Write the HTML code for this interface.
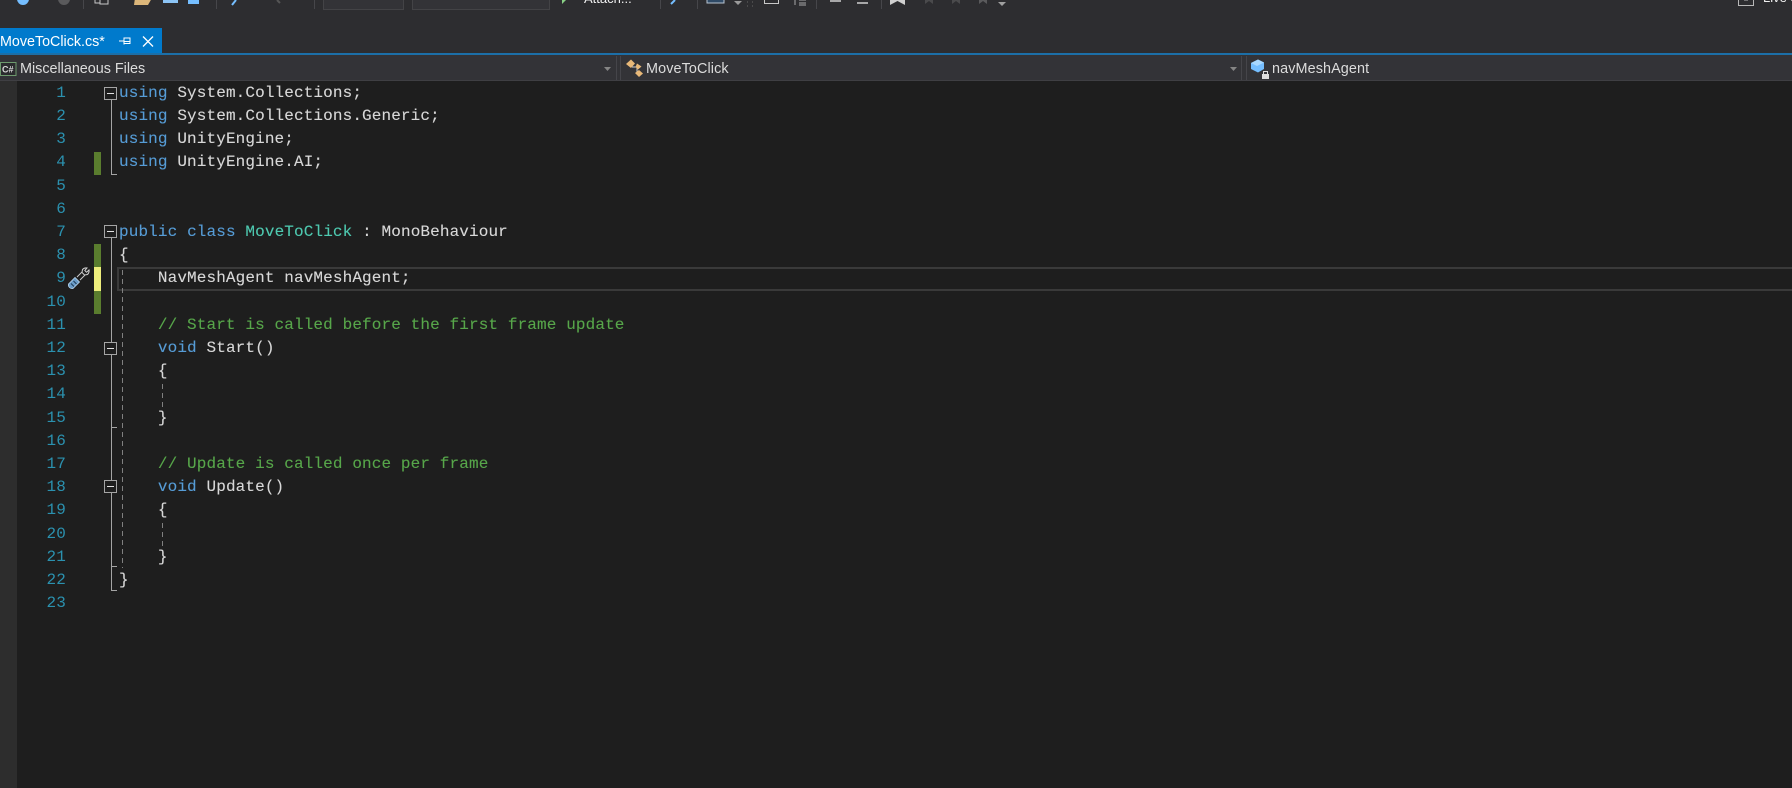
<!DOCTYPE html>
<html><head><meta charset="utf-8"><title>MoveToClick.cs</title>
<style>
html,body{margin:0;padding:0;background:#1e1e1e}
#r{position:relative;width:1792px;height:788px;overflow:hidden;background:#1e1e1e;font-family:"Liberation Sans",sans-serif}
#r div,#r svg,#r span.a{position:absolute}
.b{background:#2d2d30}
.ln,.cd{height:23.2px;line-height:23.2px;font-family:"Liberation Mono",monospace;font-size:16px;white-space:pre;top:calc(81.8px + var(--i)*23.2px)}
.ln{left:30px;width:36px;text-align:right;color:#2b91af;letter-spacing:.12px}
.cd{left:119px;color:#d8d8d8;letter-spacing:.12px;-webkit-text-stroke:.1px}
.k{color:#569cd6}.t{color:#4ec9b0}.c{color:#57a64a}
.ui{font-size:14.4px;line-height:24px;white-space:nowrap;color:#dcdcdc}
.sep{background:#46464a;width:1px;top:0;height:9px}
.v{background:#a5a5a5;width:1px}
.h{background:#a5a5a5;height:1px;width:6px;left:111px}
.fb{left:104px;width:11px;height:11px;border:1px solid #a5a5a5;background:#1e1e1e}
.fb::after{content:"";position:absolute;left:2px;right:2px;top:5px;height:1px;background:#e0e0e0}
.d{width:1px;background:repeating-linear-gradient(to bottom,#808080 0 5px,transparent 5px 9px)}
</style></head><body>
<div id="r">
<!-- toolbar -->
<div class="b" style="left:0;top:0;width:1792px;height:55px"></div>
<svg style="left:0;top:0" width="1792" height="12" viewBox="0 0 1792 12">
<circle cx="23" cy="-1" r="6" fill="#75beff"/><circle cx="64" cy="-1" r="6" fill="#5a5a5c"/>
<rect x="95" y="-4" width="9" height="7" fill="none" stroke="#c8c8c8"/><rect x="100" y="-2" width="8" height="6" fill="#2d2d30" stroke="#c8c8c8"/>
<path d="M135 -2H152L148 5H134Z" fill="#dcb67a"/>
<rect x="163" y="-2" width="15" height="5" fill="#8cc4f5"/><rect x="188" y="-2" width="11" height="6" fill="#75beff"/>
<path d="M232 5L236 0" stroke="#75beff" stroke-width="2"/><path d="M277 0L280 3" stroke="#555" stroke-width="2"/>
<rect x="323.500" y="-3" width="80" height="12.500" fill="#333337" stroke="#434346"/>
<rect x="412.500" y="-3" width="137" height="12.500" fill="#333337" stroke="#434346"/>
<path d="M562 0L566 0L562 4Z" fill="#89d185"/>
<path d="M671 4L675 0M675 -2h4" stroke="#75beff" stroke-width="2" fill="none"/>
<rect x="707" y="-3" width="17" height="6" fill="#2f4a66" stroke="#b8c4d0"/>
<path d="M734 1H742L738 5Z" fill="#9a9a9a"/>
<path d="M747 2h1M752 2h1M747 6h1M752 6h1" stroke="#666"/>
<rect x="764.500" y="-3" width="14" height="6.500" fill="none" stroke="#c8c8c8"/>
<path d="M795 0V5M799 0h7M799 3h7M799 5h7" stroke="#a8a8a8" fill="none"/>
<path d="M830 1h11M857 3h11" stroke="#d0d0d0" stroke-width="1.500"/>
<path d="M890 -2H905V5L897.500 1L890 5Z" fill="#d0d0d0"/>
<path d="M925 -2H933V4L929 1L925 4Z" fill="#4a4a4c"/><path d="M952 -2H960V4L956 1L952 4Z" fill="#4a4a4c"/><path d="M979 -2H987V4L983 1L979 4Z" fill="#5a5a5c"/>
<path d="M998 2H1006L1002 6Z" fill="#a0a0a0"/>
<path d="M1738.500 -3V5.500H1753.500V-3M1744 0H1748" fill="none" stroke="#b8b8b8"/>
</svg>
<div class="sep" style="left:83px"></div><div class="sep" style="left:216px"></div><div class="sep" style="left:314px"></div><div class="sep" style="left:660px"></div><div class="sep" style="left:697px"></div><div class="sep" style="left:816px"></div><div class="sep" style="left:881px"></div>
<div class="ui" style="left:584px;top:-13px;font-size:13px;color:#f1f1f1">Attach...</div>
<div class="ui" style="left:1763px;top:-14px;font-size:13px;color:#f1f1f1">Live Share</div>
<!-- tab -->
<div style="left:0;top:28px;width:162px;height:26px;background:#007acc"></div>
<div class="ui" style="left:0;top:29px;width:108px;color:#fff;font-size:14.300px;line-height:26px">MoveToClick.cs*</div>
<svg style="left:118px;top:34px" width="40" height="14" viewBox="0 0 40 14"><path d="M1 7H6M6 3.500V10.500M6 4H12V9.500H6M6 7.500H12" fill="none" stroke="#fff"/><path d="M25 2.500L35 12.500M35 2.500L25 12.500" stroke="#fff" stroke-width="1.300"/></svg>
<div style="left:0;top:53px;width:1792px;height:2px;background:#1c6fa8"></div>
<!-- nav bar -->
<div style="left:0;top:55px;width:1792px;height:25px;background:#333337"></div>
<div style="left:0;top:80px;width:1792px;height:1px;background:#3f3f43"></div>
<div style="left:616px;top:56px;width:1px;height:24px;background:#45454a"></div>
<div style="left:620px;top:56px;width:1px;height:24px;background:#45454a"></div>
<div style="left:1241px;top:56px;width:1px;height:24px;background:#45454a"></div>
<div style="left:1246px;top:56px;width:1px;height:24px;background:#45454a"></div>
<svg style="left:0;top:59px" width="18" height="20" viewBox="0 0 18 20"><rect x=".5" y="3.500" width="15.500" height="13" fill="#2b2b2e" stroke="#6d9a6d"/><text x="2" y="13.500" font-family="Liberation Sans,sans-serif" font-weight="700" font-size="9" fill="#d8d8d8">C#</text></svg>
<div class="ui" style="left:20px;top:57px;letter-spacing:-.02px">Miscellaneous Files</div>
<svg style="left:604px;top:67px" width="7" height="4" viewBox="0 0 7 4"><path d="M0 0H7L3.500 4Z" fill="#858585"/></svg>
<svg style="left:1230px;top:67px" width="7" height="4" viewBox="0 0 7 4"><path d="M0 0H7L3.500 4Z" fill="#858585"/></svg>
<svg style="left:625px;top:58px" width="20" height="20" viewBox="0 0 20 20"><path d="M1 6L6 1.500L10 5.500L6 10Z" fill="#e8b878"/><path d="M7 9L12 9V15" fill="none" stroke="#d0d0d0"/><path d="M12 5.500L16.500 8.500L13 11.500L10.500 9Z" fill="#e8b878"/><path d="M10 15L14 12L18 15.500L14 19Z" fill="#e8b878"/></svg>
<div class="ui" style="left:646px;top:57px;letter-spacing:.1px">MoveToClick</div>
<svg style="left:1250px;top:58px" width="22" height="22" viewBox="0 0 22 22"><path d="M1 5L8 1.500L14 4.500V11L8 14.500L1 11Z" fill="#75beff"/><path d="M1 5L7 8L14 4.500L8 1.500Z" fill="#a8d8ff"/><rect x="12" y="16" width="7" height="5" fill="#ddd"/><path d="M13.500 16V13.500H17.500V16" fill="none" stroke="#ddd"/></svg>
<div class="ui" style="left:1272px;top:57px;letter-spacing:.1px">navMeshAgent</div>
<!-- left strip -->
<div style="left:0;top:81px;width:17px;height:707px;background:#2d2d2d"></div>
<!-- line 9 highlight -->
<div style="left:117px;top:267px;width:1680px;height:20px;border:2px solid #3a3a3a"></div>
<!-- change bars -->
<div style="left:94px;top:151.500px;width:7px;height:23.500px;background:#5a7d2e"></div>
<div style="left:94px;top:244px;width:7px;height:70px;background:#5a7d2e"></div>
<div style="left:94px;top:267px;width:7px;height:24px;background:#eeee7c"></div>
<!-- fold lines -->
<div class="v" style="left:111px;top:99px;height:75px"></div><div class="h" style="top:174px"></div>
<div class="v" style="left:111px;top:238px;height:353px"></div><div class="h" style="top:590px"></div>
<div class="h" style="top:427px"></div><div class="h" style="top:566px"></div>
<div class="fb" style="top:87px"></div><div class="fb" style="top:225px"></div><div class="fb" style="top:342px"></div><div class="fb" style="top:480px"></div>
<!-- indent guides -->
<div class="d" style="left:122px;top:270px;height:298px"></div>
<div class="d" style="left:162px;top:384px;height:23px"></div>
<div class="d" style="left:162px;top:523px;height:23px"></div>
<!-- line numbers -->
<div class="ln" style="--i:0">1</div><div class="ln" style="--i:1">2</div><div class="ln" style="--i:2">3</div><div class="ln" style="--i:3">4</div><div class="ln" style="--i:4">5</div><div class="ln" style="--i:5">6</div><div class="ln" style="--i:6">7</div><div class="ln" style="--i:7">8</div><div class="ln" style="--i:8">9</div><div class="ln" style="--i:9">10</div><div class="ln" style="--i:10">11</div><div class="ln" style="--i:11">12</div><div class="ln" style="--i:12">13</div><div class="ln" style="--i:13">14</div><div class="ln" style="--i:14">15</div><div class="ln" style="--i:15">16</div><div class="ln" style="--i:16">17</div><div class="ln" style="--i:17">18</div><div class="ln" style="--i:18">19</div><div class="ln" style="--i:19">20</div><div class="ln" style="--i:20">21</div><div class="ln" style="--i:21">22</div><div class="ln" style="--i:22">23</div>
<!-- code -->
<div class="cd" style="--i:0"><span class="k">using</span> System.Collections;</div>
<div class="cd" style="--i:1"><span class="k">using</span> System.Collections.Generic;</div>
<div class="cd" style="--i:2"><span class="k">using</span> UnityEngine;</div>
<div class="cd" style="--i:3"><span class="k">using</span> UnityEngine.AI;</div>
<div class="cd" style="--i:6"><span class="k">public</span> <span class="k">class</span> <span class="t">MoveToClick</span> : MonoBehaviour</div>
<div class="cd" style="--i:7">{</div>
<div class="cd" style="--i:8">    NavMeshAgent navMeshAgent;</div>
<div class="cd c" style="--i:10;color:#57a64a">    // Start is called before the first frame update</div>
<div class="cd" style="--i:11">    <span class="k">void</span> Start()</div>
<div class="cd" style="--i:12">    {</div>
<div class="cd" style="--i:14">    }</div>
<div class="cd c" style="--i:16;color:#57a64a">    // Update is called once per frame</div>
<div class="cd" style="--i:17">    <span class="k">void</span> Update()</div>
<div class="cd" style="--i:18">    {</div>
<div class="cd" style="--i:20">    }</div>
<div class="cd" style="--i:21">}</div>
<!-- screwdriver -->
<svg style="left:67px;top:267px" width="23" height="23" viewBox="0 0 23 23">
<path d="M1.500 17L8 10.500L12.500 15L6 21.500Q4 22 2.500 20.500Q1 19 1.500 17Z" fill="#6a9cc8" stroke="#b8d4ec" stroke-width=".8"/>
<path d="M4 16.500L7 19.500M6.500 14L9.500 17" stroke="#1e3a55" stroke-width="1"/>
<path d="M10 10L15 5M13 13L18 8" stroke="#c8c8c8" stroke-width="1"/>
<path d="M15 5.500L15.500 2.500Q17.500 .5 20 1L17.800 3.500L19.500 5.200L22 3Q22.500 5.500 20.500 7.500L17.500 8Z" fill="#1e1e1e" stroke="#d0d0d0" stroke-width="1"/>
</svg>
</div>
</body></html>
